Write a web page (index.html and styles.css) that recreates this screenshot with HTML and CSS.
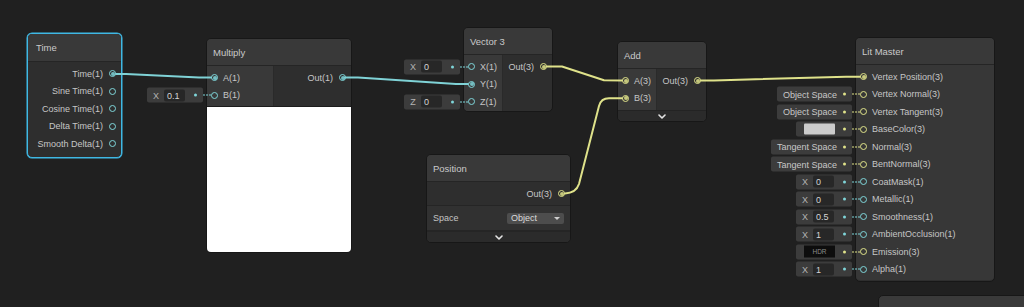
FILE: index.html
```html
<!DOCTYPE html>
<html lang="en">
<head>
<meta charset="utf-8">
<title>Shader Graph</title>
<link rel="stylesheet" href="styles.css">
</head>
<body>
<div class="canvas">

  <!-- Time -->
  <div class="node n-time selected">
    <div class="title">Time</div>
    <div class="body">
      <div class="outputs">
        <div class="row out v1"><span>Time(1)</span><i class="port on"></i></div>
        <div class="row out v1"><span>Sine Time(1)</span><i class="port"></i></div>
        <div class="row out v1"><span>Cosine Time(1)</span><i class="port"></i></div>
        <div class="row out v1"><span>Delta Time(1)</span><i class="port"></i></div>
        <div class="row out v1"><span>Smooth Delta(1)</span><i class="port"></i></div>
      </div>
    </div>
  </div>

  <!-- Multiply -->
  <div class="node n-mul">
    <div class="title">Multiply</div>
    <div class="body">
      <div class="inputs">
        <div class="row in v1"><i class="port on"></i><span>A(1)</span></div>
        <div class="row in v1">
          <div class="slot"><div class="box num"><span class="lbl">X</span><span class="field">0.1</span><span class="dot"></span></div><span class="link"></span></div>
          <i class="port"></i><span>B(1)</span>
        </div>
      </div>
      <div class="outputs">
        <div class="row out v1"><span>Out(1)</span><i class="port on"></i></div>
      </div>
    </div>
    <div class="preview"></div>
  </div>

  <!-- Vector 3 -->
  <div class="node n-vec">
    <div class="title">Vector 3</div>
    <div class="body">
      <div class="inputs">
        <div class="row in v1">
          <div class="slot"><div class="box num"><span class="lbl">X</span><span class="field">0</span><span class="dot"></span></div><span class="link"></span></div>
          <i class="port"></i><span>X(1)</span>
        </div>
        <div class="row in v1"><i class="port on"></i><span>Y(1)</span></div>
        <div class="row in v1">
          <div class="slot"><div class="box num"><span class="lbl">Z</span><span class="field">0</span><span class="dot"></span></div><span class="link"></span></div>
          <i class="port"></i><span>Z(1)</span>
        </div>
      </div>
      <div class="outputs">
        <div class="row out v3"><span>Out(3)</span><i class="port on"></i></div>
      </div>
    </div>
  </div>

  <!-- Add -->
  <div class="node n-add">
    <div class="title">Add</div>
    <div class="body">
      <div class="inputs">
        <div class="row in v3"><i class="port on"></i><span>A(3)</span></div>
        <div class="row in v3"><i class="port on"></i><span>B(3)</span></div>
      </div>
      <div class="outputs">
        <div class="row out v3"><span>Out(3)</span><i class="port on"></i></div>
      </div>
    </div>
    <div class="expand"><svg width="8" height="5" viewBox="0 0 8 5"><polyline points="1,1 4,4 7,1"/></svg></div>
  </div>

  <!-- Position -->
  <div class="node n-pos">
    <div class="title">Position</div>
    <div class="outputs single">
      <div class="row out v3"><span>Out(3)</span><i class="port on"></i></div>
    </div>
    <div class="controls">
      <span class="ctl-label">Space</span>
      <div class="dropdown"><span>Object</span><i class="tri"></i></div>
    </div>
    <div class="expand"><svg width="8" height="5" viewBox="0 0 8 5"><polyline points="1,1 4,4 7,1"/></svg></div>
  </div>

  <!-- Lit Master -->
  <div class="node n-lit">
    <div class="title">Lit Master</div>
    <div class="body">
      <div class="inputs full">
        <div class="row in v3"><i class="port on"></i><span>Vertex Position(3)</span></div>
        <div class="row in v3">
          <div class="slot"><div class="box txt"><span>Object Space</span><span class="dot"></span></div><span class="link"></span></div>
          <i class="port"></i><span>Vertex Normal(3)</span>
        </div>
        <div class="row in v3">
          <div class="slot"><div class="box txt"><span>Object Space</span><span class="dot"></span></div><span class="link"></span></div>
          <i class="port"></i><span>Vertex Tangent(3)</span>
        </div>
        <div class="row in v3">
          <div class="slot"><div class="box swatch-box"><span class="swatch"></span><span class="dot"></span></div><span class="link"></span></div>
          <i class="port"></i><span>BaseColor(3)</span>
        </div>
        <div class="row in v3">
          <div class="slot"><div class="box txt"><span>Tangent Space</span><span class="dot"></span></div><span class="link"></span></div>
          <i class="port"></i><span>Normal(3)</span>
        </div>
        <div class="row in v3">
          <div class="slot"><div class="box txt"><span>Tangent Space</span><span class="dot"></span></div><span class="link"></span></div>
          <i class="port"></i><span>BentNormal(3)</span>
        </div>
        <div class="row in v1">
          <div class="slot"><div class="box num"><span class="lbl">X</span><span class="field">0</span><span class="dot"></span></div><span class="link"></span></div>
          <i class="port"></i><span>CoatMask(1)</span>
        </div>
        <div class="row in v1">
          <div class="slot"><div class="box num"><span class="lbl">X</span><span class="field">0</span><span class="dot"></span></div><span class="link"></span></div>
          <i class="port"></i><span>Metallic(1)</span>
        </div>
        <div class="row in v1">
          <div class="slot"><div class="box num"><span class="lbl">X</span><span class="field">0.5</span><span class="dot"></span></div><span class="link"></span></div>
          <i class="port"></i><span>Smoothness(1)</span>
        </div>
        <div class="row in v1">
          <div class="slot"><div class="box num"><span class="lbl">X</span><span class="field">1</span><span class="dot"></span></div><span class="link"></span></div>
          <i class="port"></i><span>AmbientOcclusion(1)</span>
        </div>
        <div class="row in v3">
          <div class="slot"><div class="box swatch-box"><span class="hdr">HDR</span><span class="dot"></span></div><span class="link"></span></div>
          <i class="port"></i><span>Emission(3)</span>
        </div>
        <div class="row in v1">
          <div class="slot"><div class="box num"><span class="lbl">X</span><span class="field">1</span><span class="dot"></span></div><span class="link"></span></div>
          <i class="port"></i><span>Alpha(1)</span>
        </div>
      </div>
    </div>
  </div>

  <!-- partially visible node -->
  <div class="node n-partial"></div>

  <svg class="wires" width="1024" height="307" viewBox="0 0 1024 307">
    <path class="w1" d="M116 74 L126 74 L199 77.5 L211 77.5"/>
    <path class="w1" d="M345 77.5 L358 77.5 L456 84 L468 84"/>
    <path class="w3" d="M547 66.5 L562 66.5 L604 80.3 L622 80.5"/>
    <path class="w3" d="M565 193.5 Q576 193 579 184 L599 106 Q601 98.3 609 98.3 L622 98.3"/>
    <path class="w3" d="M701 80.5 L714 80.5 L846 76.7 L860 76.7"/>
  </svg>
</div>
</body>
</html>
```

FILE: styles.css
```css
html, body {
  margin: 0;
  padding: 0;
  background: #202020;
}

.canvas {
  position: relative;
  width: 1024px;
  height: 307px;
  overflow: hidden;
  background: #202020;
  font-family: "Liberation Sans", Arial, sans-serif;
  color: #c4c4c4;
}

.v1 { --c: #7fd6da; }
.v3 { --c: #e0e38a; }

/* ---------- nodes ---------- */
.node {
  position: absolute;
  box-sizing: border-box;
  border: 1px solid #171717;
  border-radius: 5px;
  background: #2e2e2e;
  display: flex;
  flex-direction: column;
}

.node.selected {
  border-color: #3fb8e4;
  box-shadow: 0 0 0 0.5px #3fb8e4;
}

.n-time { left: 27px; top: 33px; width: 95px; height: 125px; }
.n-mul { left: 206px; top: 38px; width: 146px; height: 215px; }
.n-vec { left: 463px; top: 27px; width: 90px; height: 85px; }
.n-add { left: 617px; top: 41px; width: 90px; height: 81px; }
.n-pos { left: 426px; top: 154px; width: 145px; height: 89px; }
.n-lit { left: 855px; top: 37px; width: 140px; height: 245px; }
.n-partial { left: 878px; top: 295px; width: 170px; height: 40px; background: #3a3a3a; }

.title {
  height: 26px;
  flex: none;
  display: flex;
  align-items: center;
  padding-left: 6px;
  font-size: 9.5px;
  color: #cacaca;
  background: #393939;
  border-bottom: 1px solid #252525;
  border-radius: 4px 4px 0 0;
}

.n-time .title { height: 27px; padding-left: 8px; }

.body {
  display: flex;
  flex: none;
}

.inputs {
  background: #393939;
  padding: 3px 0 2px;
  border-right: 1px solid #2a2a2a;
}

.inputs.full {
  flex: 1;
  border-right: 0;
  background: #373737;
  border-radius: 0 0 4px 4px;
}

.n-mul .inputs { width: 67px; box-sizing: border-box; }
.n-vec .inputs, .n-add .inputs { width: 39px; box-sizing: border-box; }

.outputs {
  flex: 1;
  padding: 3px 0 2px;
}

.n-time .outputs { padding-top: 3px; }
.n-vec .inputs, .n-vec .outputs { padding-bottom: 0; border-radius: 0 0 0 4px; }
.n-vec .outputs { border-radius: 0 0 4px 0; }
.n-add .inputs, .n-add .outputs { padding-bottom: 3px; }

.outputs.single {
  flex: none;
  height: 23px;
  padding: 0;
  display: flex;
  align-items: center;
  border-bottom: 1px solid #252525;
}

.outputs.single .row { flex: 1; }

/* ---------- rows & ports ---------- */
.row {
  position: relative;
  height: 17.5px;
  display: flex;
  align-items: center;
  font-size: 9px;
  color: #c6c6c6;
  white-space: nowrap;
}

.row.in {
  padding-left: 4px;
  gap: 5px;
}

.row.out {
  justify-content: flex-end;
  padding-right: 5px;
  gap: 6px;
}

.port {
  position: relative;
  flex: none;
  width: 7px;
  height: 7px;
  box-sizing: border-box;
  border: 1.5px solid var(--c);
  border-radius: 50%;
}

.port.on::after {
  content: "";
  position: absolute;
  inset: 0.5px;
  border-radius: 50%;
  background: var(--c);
  opacity: 0.85;
}

/* ---------- inline input slots ---------- */
.slot {
  position: absolute;
  right: calc(100% - 4px);
  top: 50%;
  transform: translateY(-50%);
  display: flex;
  align-items: center;
}

.box {
  height: 15px;
  box-sizing: border-box;
  display: flex;
  align-items: center;
  background: #3c3c3c;
  border-radius: 2px;
  font-size: 9px;
  color: #c8c8c8;
}

.box.num {
  width: 56px;
  padding: 0 6px 0 5px;
}

.box.txt {
  padding: 0 6px 0 6px;
  gap: 6px;
}

.box.swatch-box {
  width: 56px;
  padding: 0 6px 0 8px;
}

.lbl {
  width: 8px;
  text-align: center;
  color: #b4b4b4;
}

.field {
  margin-left: 4px;
  width: 21px;
  height: 12px;
  box-sizing: border-box;
  padding-left: 3px;
  line-height: 12px;
  background: #272727;
  border-radius: 2px;
  color: #d4d4d4;
}

.swatch {
  width: 31px;
  height: 11px;
  background: #cbcbcb;
  border-radius: 1px;
}

.hdr {
  width: 31px;
  height: 12px;
  background: #0d0d0d;
  color: #8a8a8a;
  font-size: 6.5px;
  line-height: 12px;
  text-align: center;
}

.dot {
  margin-left: auto;
  width: 3px;
  height: 3px;
  border-radius: 50%;
  background: var(--c);
  flex: none;
}

.link {
  width: 8px;
  height: 1px;
  background: repeating-linear-gradient(90deg, var(--c) 0 2px, transparent 2px 3px);
}

/* ---------- preview ---------- */
.preview {
  flex: 1;
  background: #ffffff;
  border-top: 1px solid #1c1c1c;
  border-radius: 0 0 4px 4px;
}

/* ---------- controls ---------- */
.controls {
  height: 24px;
  flex: none;
  display: flex;
  align-items: center;
  justify-content: space-between;
  padding: 0 6px 0 6px;
  background: #313131;
  border-bottom: 1px solid #252525;
  font-size: 9px;
}

.ctl-label { color: #c4c4c4; }

.dropdown {
  width: 57px;
  height: 11px;
  box-sizing: border-box;
  display: flex;
  align-items: center;
  justify-content: space-between;
  padding: 0 4px;
  background: #4d4d4d;
  border-radius: 2px;
  color: #dadada;
  font-size: 9px;
}

.tri {
  width: 0;
  height: 0;
  border-left: 3px solid transparent;
  border-right: 3px solid transparent;
  border-top: 3px solid #cfcfcf;
}

/* ---------- expand bar ---------- */
.expand {
  flex: 1;
  display: flex;
  align-items: center;
  justify-content: center;
  background: #2b2b2b;
  border-top: 1px solid #252525;
  border-radius: 0 0 4px 4px;
}

.n-add .expand { border-top: 1px solid #232323; }

.expand svg polyline {
  fill: none;
  stroke: #e4e4e4;
  stroke-width: 1.6;
  stroke-linecap: round;
  stroke-linejoin: round;
}

/* ---------- wires ---------- */
.wires {
  position: absolute;
  left: 0;
  top: 0;
  pointer-events: none;
}

.wires path {
  fill: none;
  stroke-width: 2;
  stroke-linecap: round;
  stroke-linejoin: round;
}

.wires .w1 { stroke: #7fd2d6; }
.wires .w3 { stroke: #dfe28a; }
```
